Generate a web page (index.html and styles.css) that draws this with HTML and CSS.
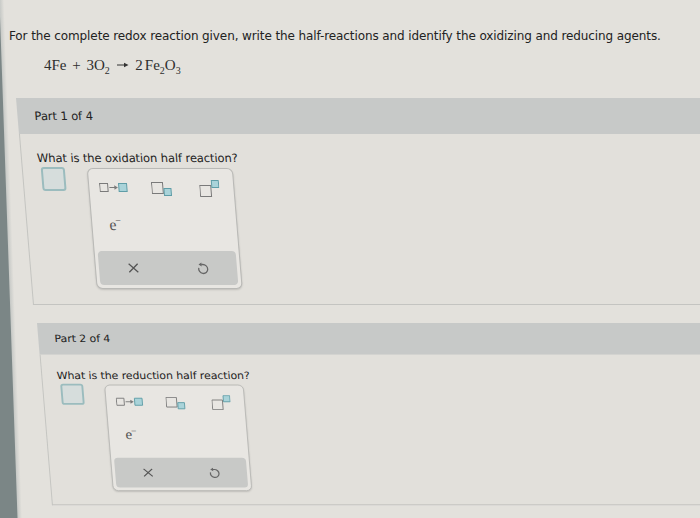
FILE: index.html
```html
<!DOCTYPE html>
<html lang="en">
<head>
<meta charset="utf-8">
<title>Redox half-reactions</title>
<link rel="stylesheet" href="styles.css">
</head>
<body>
<main class="page">
  <p class="prompt">For the complete redox reaction given, write the half-reactions and identify the oxidizing and reducing agents.</p>
  <p class="equation">4Fe <span class="op">+</span> 3O<sub>2</sub> <svg class="arrow" width="12" height="6" viewBox="0 0 12 6"><path d="M0 3H8" stroke="#333" stroke-width="1"/><path d="M7 0.8L11.5 3L7 5.2Z" fill="#333"/></svg> 2<span class="thin"></span>Fe<sub>2</sub>O<sub>3</sub></p>

  <section class="part part--one">
    <div class="part-head">Part 1 of 4</div>
    <div class="part-body">
      <p class="question">What is the oxidation half reaction?</p>
      <div class="answer">
        <div class="answer-box"></div>
        <div class="palette">
          <div class="tpl-row">
            <svg class="tpl tpl-arrow" width="29" height="11" viewBox="0 0 29 11"><rect x="0.5" y="1.5" width="8" height="8" fill="none" stroke="#7a7a7a"/><path d="M10 5.5H16" stroke="#7a7a7a"/><path d="M15 3.3L18.5 5.5L15 7.7Z" fill="#7a7a7a"/><rect x="19.5" y="1.5" width="8" height="8" fill="#a9d3d9" stroke="#5f9da7"/></svg>
            <svg class="tpl tpl-sub" width="21" height="15" viewBox="0 0 21 15"><rect x="0.5" y="0.5" width="11" height="11" fill="none" stroke="#7a7a7a"/><rect x="12.5" y="6.5" width="7" height="7" fill="#a9d3d9" stroke="#5f9da7"/></svg>
            <svg class="tpl tpl-sup" width="20" height="17" viewBox="0 0 20 17"><rect x="0.5" y="5.5" width="11" height="11" fill="none" stroke="#7a7a7a"/><rect x="12.5" y="0.5" width="7" height="7" fill="#a9d3d9" stroke="#5f9da7"/></svg>
          </div>
          <div class="electron">e<sup>−</sup></div>
          <div class="palette-actions">
            <span class="action"><svg width="11" height="10" viewBox="0 0 11 10"><path d="M1 0.8L10 9.2M10 0.8L1 9.2" stroke="#555" stroke-width="1.3"/></svg></span>
            <span class="action"><svg width="12" height="14" viewBox="0 0 12 14"><path d="M4.5 3.5H6A4.5 4.5 0 1 1 1.8 6.8" fill="none" stroke="#666" stroke-width="1.3"/><path d="M1.8 3.5L4.8 1.6V5.4Z" fill="#666"/></svg></span>
          </div>
        </div>
      </div>
    </div>
  </section>

  <section class="part part--two">
    <div class="part-head">Part 2 of 4</div>
    <div class="part-body">
      <p class="question">What is the reduction half reaction?</p>
      <div class="answer">
        <div class="answer-box"></div>
        <div class="palette">
          <div class="tpl-row">
            <svg class="tpl tpl-arrow" width="29" height="11" viewBox="0 0 29 11"><rect x="0.5" y="1.5" width="8" height="8" fill="none" stroke="#7a7a7a"/><path d="M10 5.5H16" stroke="#7a7a7a"/><path d="M15 3.3L18.5 5.5L15 7.7Z" fill="#7a7a7a"/><rect x="19.5" y="1.5" width="8" height="8" fill="#a9d3d9" stroke="#5f9da7"/></svg>
            <svg class="tpl tpl-sub" width="21" height="15" viewBox="0 0 21 15"><rect x="0.5" y="0.5" width="11" height="11" fill="none" stroke="#7a7a7a"/><rect x="12.5" y="6.5" width="7" height="7" fill="#a9d3d9" stroke="#5f9da7"/></svg>
            <svg class="tpl tpl-sup" width="20" height="17" viewBox="0 0 20 17"><rect x="0.5" y="5.5" width="11" height="11" fill="none" stroke="#7a7a7a"/><rect x="12.5" y="0.5" width="7" height="7" fill="#a9d3d9" stroke="#5f9da7"/></svg>
          </div>
          <div class="electron">e<sup>−</sup></div>
          <div class="palette-actions">
            <span class="action"><svg width="11" height="10" viewBox="0 0 11 10"><path d="M1 0.8L10 9.2M10 0.8L1 9.2" stroke="#555" stroke-width="1.3"/></svg></span>
            <span class="action"><svg width="12" height="14" viewBox="0 0 12 14"><path d="M4.5 3.5H6A4.5 4.5 0 1 1 1.8 6.8" fill="none" stroke="#666" stroke-width="1.3"/><path d="M1.8 3.5L4.8 1.6V5.4Z" fill="#666"/></svg></span>
          </div>
        </div>
      </div>
    </div>
  </section>
</main>
</body>
</html>
```

FILE: styles.css
```css
html {
  height: 100%;
  background: linear-gradient(88deg, #7b8686 0, #7b8686 17px, #c9cbc8 18px, #e3e1dc 22px);
}

body {
  margin: 0;
  height: 518px;
  overflow: hidden;
  font-family: "DejaVu Sans", Verdana, sans-serif;
  color: #222;
}

.page {
  width: 700px;
}

.prompt {
  margin: 0;
  padding: 28px 0 0 9px;
  font-size: 12px;
  line-height: 16px;
  letter-spacing: -0.1px;
  white-space: nowrap;
}

.equation {
  margin: 0;
  padding: 12px 0 0 44px;
  height: 18px;
  font-family: "Liberation Serif", "Times New Roman", serif;
  font-size: 15px;
  line-height: 18px;
  color: #2e2e2e;
}

.equation sub {
  font-size: 10px;
  vertical-align: -4px;
  line-height: 0;
}

.equation .op {
  margin: 0 2px;
}

.equation .arrow {
  margin: 0 3px;
  vertical-align: 2px;
}

.equation .thin {
  display: inline-block;
  width: 2px;
}

.part {
  width: 760px;
  transform-origin: 0 0;
}

.part--one {
  margin: 24px 0 0 16px;
  transform: skewX(4.7deg);
}

.part--two {
  margin: 18px 0 0 37px;
  transform: skewX(4.7deg) scale(0.955, 0.88);
}

.part-head {
  height: 36px;
  box-sizing: border-box;
  background: #c7c9c8;
  display: flex;
  align-items: center;
  padding-left: 17px;
  font-size: 11.5px;
  letter-spacing: -0.1px;
}

.part-body {
  height: 171px;
  box-sizing: border-box;
  border-left: 1px solid #c4c4c1;
  border-bottom: 1px solid #c4c4c1;
  padding: 17px 0 0 15px;
  background: #e2e0db;
}

.question {
  margin: 0;
  font-size: 11.5px;
  line-height: 14px;
  letter-spacing: -0.1px;
  white-space: nowrap;
}

.answer {
  display: flex;
  align-items: flex-start;
  gap: 22px;
  margin: 2px 0 0 3px;
}

.answer-box {
  width: 24px;
  height: 24px;
  box-sizing: border-box;
  border: 2px solid #9bbcbe;
  border-radius: 3px;
  background: #d6dddc;
}

.palette {
  width: 146px;
  height: 121px;
  margin-top: 1px;
  box-sizing: border-box;
  padding: 3px;
  border: 1px solid #b9b9b6;
  border-radius: 6px;
  background: #e8e6e2;
  box-shadow: 0 1px 2px rgba(0, 0, 0, 0.15);
  display: flex;
  flex-direction: column;
}

.tpl-row {
  display: flex;
  align-items: center;
  height: 20px;
  margin-top: 5px;
  padding-left: 7px;
}

.tpl-arrow {
  margin-right: 23px;
}

.tpl-sub {
  margin-right: 27px;
  margin-top: 4px;
}

.tpl-sup {
  margin-top: 2px;
}

.electron {
  margin: 19px 0 0 14px;
  font-family: "Liberation Serif", "Times New Roman", serif;
  font-size: 16px;
  line-height: 18px;
  color: #555;
}

.electron sup {
  font-size: 10px;
  vertical-align: 6px;
  line-height: 0;
  margin-left: -1px;
}

.palette-actions {
  margin-top: auto;
  height: 34px;
  display: flex;
  background: #c8c9c7;
  border-radius: 4px;
}

.action {
  flex: 1;
  display: flex;
  align-items: center;
  justify-content: center;
}
```
